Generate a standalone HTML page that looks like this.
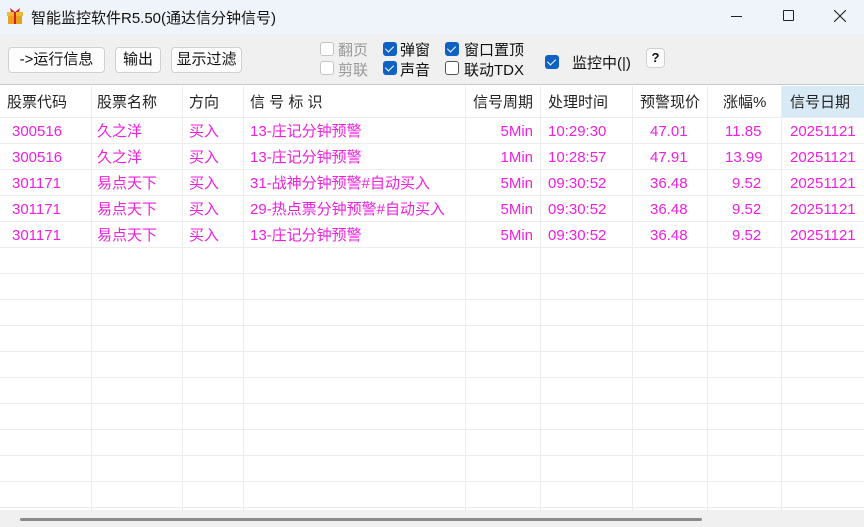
<!DOCTYPE html>
<html><head><meta charset="utf-8"><style>
*{margin:0;padding:0;box-sizing:border-box}
body{width:864px;height:527px;overflow:hidden;background:#fff;font-family:"Liberation Sans","Noto Sans CJK SC",sans-serif;position:relative}
.title{position:absolute;left:0;top:0;width:864px;height:35px;background:#eff3fa}
.title span{position:absolute;left:31px;top:7px;font-size:15px;color:#111}
.tb{position:absolute;left:0;top:35px;width:864px;height:50px;background:#f0f0f0;border-bottom:1px solid #c8c8c8}
.btn{position:absolute;top:12px;height:26px;background:#fdfdfd;border:1px solid #d0d0d0;border-radius:4px;font-size:15px;text-align:center;line-height:24px;color:#111}
.cb{position:absolute;width:14px;height:14px;border-radius:3px}
.on{background:#0f62c4}
.on::after{content:"";position:absolute;left:4px;top:2px;width:4px;height:7px;border:solid #fff;border-width:0 1.5px 1.5px 0;transform:rotate(45deg)}
.off{border:1px solid #555;background:#fff}
.dis{border:1px solid #c4c4c4;background:#fff}
.lbl{position:absolute;font-size:15px;color:#111}
.grid{position:absolute;left:0;top:86px;width:864px;height:424px}
.vl{position:absolute;top:0;width:1px;height:424px;background:#ececec}
.hl{position:absolute;left:0;width:864px;height:1px;background:#ececec}
.hd{position:absolute;top:1px;height:31px;font-size:15px;line-height:31px;color:#222}
.c{position:absolute;font-size:15px;color:#f020e0;line-height:26px}
.sb{position:absolute;left:0;top:510px;width:864px;height:17px;background:#f0f0f0}
</style></head><body>
<div class="title">
<svg style="position:absolute;left:6px;top:7px" width="18" height="18" viewBox="0 0 18 18"><rect x="2" y="7" width="14" height="10" fill="#e8a020"/><rect x="1" y="5" width="16" height="4" fill="#f0b830"/><rect x="8" y="5" width="2" height="12" fill="#d02020"/><path d="M9 5 L4 1 L5 5 Z M9 5 L14 1 L13 5Z" fill="#d02020"/></svg>
<span>智能监控软件R5.50(通达信分钟信号)</span>
<div style="position:absolute;left:731px;top:16px;width:11px;height:1px;background:#222"></div>
<div style="position:absolute;left:783px;top:10px;width:11px;height:11px;border:1px solid #222;border-radius:1px"></div>
<svg style="position:absolute;left:834px;top:10px" width="12" height="12"><path d="M0 0L12 12M12 0L0 12" stroke="#222" stroke-width="1.1"/></svg>
</div>
<div class="tb">
<div class="btn" style="left:8px;width:97px">-&gt;运行信息</div>
<div class="btn" style="left:115px;width:46px">输出</div>
<div class="btn" style="left:171px;width:71px">显示过滤</div>
<div class="cb dis" style="left:320px;top:7px"></div><div class="lbl" style="left:338px;top:4px;color:#999">翻页</div>
<div class="cb dis" style="left:320px;top:26px"></div><div class="lbl" style="left:338px;top:24px;color:#999">剪联</div>
<div class="cb on" style="left:383px;top:7px"></div><div class="lbl" style="left:400px;top:4px">弹窗</div>
<div class="cb on" style="left:383px;top:26px"></div><div class="lbl" style="left:400px;top:24px">声音</div>
<div class="cb on" style="left:445px;top:7px"></div><div class="lbl" style="left:464px;top:4px">窗口置顶</div>
<div class="cb off" style="left:445px;top:26px"></div><div class="lbl" style="left:464px;top:24px">联动TDX</div>
<div class="cb on" style="left:545px;top:20px"></div><div class="lbl" style="left:572px;top:17px">监控中(|)</div>
<div class="btn" style="left:646px;top:13px;width:19px;height:20px;line-height:18px;font-weight:bold;font-size:13px">?</div>
</div>
<div class="grid">
<div style="position:absolute;left:781px;top:0;width:83px;height:31px;background:#d9eaf7"></div>
<div class="vl" style="left:91px"></div><div class="vl" style="left:182px"></div><div class="vl" style="left:243px"></div><div class="vl" style="left:465px"></div><div class="vl" style="left:540px"></div><div class="vl" style="left:632px"></div><div class="vl" style="left:707px"></div><div class="vl" style="left:781px"></div>
<div class="hl" style="top:31px"></div><div class="hl" style="top:57px"></div><div class="hl" style="top:83px"></div><div class="hl" style="top:109px"></div><div class="hl" style="top:135px"></div><div class="hl" style="top:161px"></div><div class="hl" style="top:187px"></div><div class="hl" style="top:213px"></div><div class="hl" style="top:239px"></div><div class="hl" style="top:265px"></div><div class="hl" style="top:291px"></div><div class="hl" style="top:317px"></div><div class="hl" style="top:343px"></div><div class="hl" style="top:369px"></div><div class="hl" style="top:395px"></div><div class="hl" style="top:421px"></div>
<div class="hd" style="left:7px">股票代码</div><div class="hd" style="left:97px">股票名称</div><div class="hd" style="left:189px">方向</div><div class="hd" style="left:250px">信 号 标 识</div><div class="hd" style="left:473px">信号周期</div><div class="hd" style="left:548px">处理时间</div><div class="hd" style="left:640px">预警现价</div><div class="hd" style="left:723px">涨幅%</div><div class="hd" style="left:790px">信号日期</div>
<div style="position:absolute;left:0;top:33px;width:864px">
<div style="position:relative;height:26px"><span class="c" style="left:12px">300516</span><span class="c" style="left:97px">久之洋</span><span class="c" style="left:189px">买入</span><span class="c" style="left:250px">13-庄记分钟预警</span><span class="c" style="right:331px">5Min</span><span class="c" style="left:548px">10:29:30</span><span class="c" style="left:650px">47.01</span><span class="c" style="left:725px">11.85</span><span class="c" style="left:790px">20251121</span></div>
<div style="position:relative;height:26px"><span class="c" style="left:12px">300516</span><span class="c" style="left:97px">久之洋</span><span class="c" style="left:189px">买入</span><span class="c" style="left:250px">13-庄记分钟预警</span><span class="c" style="right:331px">1Min</span><span class="c" style="left:548px">10:28:57</span><span class="c" style="left:650px">47.91</span><span class="c" style="left:725px">13.99</span><span class="c" style="left:790px">20251121</span></div>
<div style="position:relative;height:26px"><span class="c" style="left:12px">301171</span><span class="c" style="left:97px">易点天下</span><span class="c" style="left:189px">买入</span><span class="c" style="left:250px">31-战神分钟预警#自动买入</span><span class="c" style="right:331px">5Min</span><span class="c" style="left:548px">09:30:52</span><span class="c" style="left:650px">36.48</span><span class="c" style="left:732px">9.52</span><span class="c" style="left:790px">20251121</span></div>
<div style="position:relative;height:26px"><span class="c" style="left:12px">301171</span><span class="c" style="left:97px">易点天下</span><span class="c" style="left:189px">买入</span><span class="c" style="left:250px">29-热点票分钟预警#自动买入</span><span class="c" style="right:331px">5Min</span><span class="c" style="left:548px">09:30:52</span><span class="c" style="left:650px">36.48</span><span class="c" style="left:732px">9.52</span><span class="c" style="left:790px">20251121</span></div>
<div style="position:relative;height:26px"><span class="c" style="left:12px">301171</span><span class="c" style="left:97px">易点天下</span><span class="c" style="left:189px">买入</span><span class="c" style="left:250px">13-庄记分钟预警</span><span class="c" style="right:331px">5Min</span><span class="c" style="left:548px">09:30:52</span><span class="c" style="left:650px">36.48</span><span class="c" style="left:732px">9.52</span><span class="c" style="left:790px">20251121</span></div>
</div>
</div>
<div class="sb"><div style="position:absolute;left:20px;top:8px;width:682px;height:3px;background:#8a8a8a;border-radius:2px"></div></div>
</body></html>
